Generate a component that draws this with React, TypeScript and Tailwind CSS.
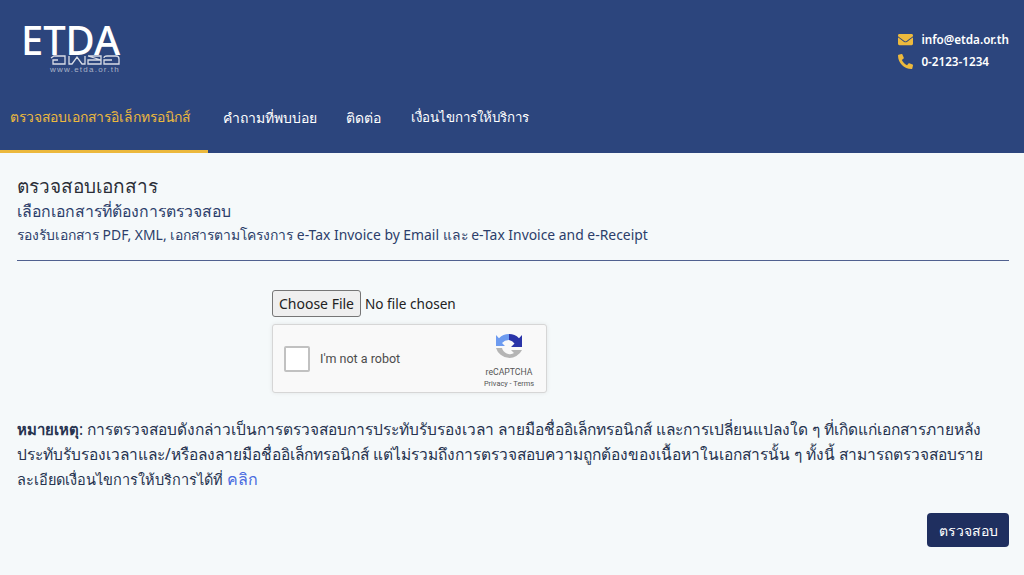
import React from "react";
import { FaEnvelope, FaPhone } from "react-icons/fa";

function Logo() {
  return (
    <div className="flex flex-col items-end w-[98px] text-white">
      <div className="font-['Noto_Sans',sans-serif] text-[40px] leading-[31px] font-medium tracking-[-0.1px] mr-[1px]">ETDA</div>
      <svg width="70" height="10" viewBox="0 0 70 10" fill="none" stroke="#d8dce6" strokeWidth="1.3" className="mr-[1px]">
        <path d="M1 3L4 1H15V9H3V5H8" />
        <path d="M19 1V9H22L27 2L32 9H35V1" />
        <path d="M38 1H51V9H38V5H51M38 1L51 5" />
        <path d="M54 3Q54 1 57 1H66Q69 1 69 4V9H54V5H62" />
      </svg>
      <div className="font-['Liberation_Sans',sans-serif] text-[8px] leading-[10px] tracking-[1.25px] text-[#a9b3c8] mr-[1px]">www.etda.or.th</div>
    </div>
  );
}

export default function App() {
  return (
    <div className="w-[1024px] h-[575px] overflow-hidden bg-[#f5f9fa] font-['Noto_Sans','Noto_Sans_CJK_SC',sans-serif] text-[#2c3e6a]">
      <header className="h-[153px] bg-[#2c457d] flex flex-col">
        <div className="h-[97px] flex justify-between pl-[23px] pr-[15px] pt-[24px]">
          <Logo />
          <div className="flex flex-col gap-[4px] pt-[6px] text-[11.7px] leading-[18px] font-semibold text-white">
            <div className="flex items-center gap-[8px]"><FaEnvelope size={15} color="#ecb93d" />info@etda.or.th</div>
            <div className="flex items-center gap-[8px]"><FaPhone size={15} color="#ecb93d" className="-scale-x-100" />0-2123-1234</div>
          </div>
        </div>
        <nav className="h-[56px] flex text-[14px] font-medium text-white">
          <a className="w-[208px] pl-[10px] pt-[10px] text-[13.9px] text-[#ecb93d] border-b-[3px] border-[#ecb93d]">ตรวจสอบเอกสารอิเล็กทรอนิกส์</a>
          <a className="pl-[15px] pr-[29px] pt-[10px]">คำถามที่พบบ่อย</a>
          <a className="pr-[30px] pt-[10px]">ติดต่อ</a>
          <a className="pt-[11px] text-[13.3px]">เงื่อนไขการให้บริการ</a>
        </nav>
      </header>
      <main className="pl-[17px] pr-[15px] pt-[20px]">
        <h1 className="text-[19px] leading-[26px] text-[#2b2f38]">ตรวจสอบเอกสาร</h1>
        <h2 className="mt-[1px] text-[15.8px] leading-[23px]">เลือกเอกสารที่ต้องการตรวจสอบ</h2>
        <p className="text-[13.9px] leading-[24px]">รองรับเอกสาร PDF, XML, เอกสารตามโครงการ e-Tax Invoice by Email และ e-Tax Invoice and e-Receipt</p>
        <hr className="mt-[13px] border-t border-[#50618f]" />
        <div className="pl-[255px] pt-[29px]">
          <div className="flex items-center h-[27px] text-[14px] text-[#222]">
            <button className="h-[27px] w-[89px] bg-[#efefef] border border-[#767676] rounded-[3px]">Choose File</button>
            <span className="ml-[4px] pt-[1px] text-[13.6px]">No file chosen</span>
          </div>
          <div className="mt-[7px] w-[275px] h-[69px] bg-[#f9f9f9] border border-[#d6d6d6] rounded-[3px] shadow-[0_0_4px_rgba(0,0,0,0.08)] flex items-center pl-[11px] pr-[11px]">
            <div className="w-[26px] h-[26px] bg-white border-2 border-[#c1c1c1] rounded-[2px]" />
            <span className="ml-[10px] pt-[1px] font-['Roboto',sans-serif] text-[12.5px] text-[#4c4c4c] flex-1">I'm not a robot</span>
            <div className="flex flex-col items-center w-[52px] pt-[6px] font-['Roboto',sans-serif] text-[#555]">
              <svg width="28" height="28" viewBox="0 0 28 28">
                <path d="M14 0a14 14 0 0 0-10 4.200L1 1v11h9L7 9a9 9 0 0 1 7-3z" fill="#6d9bf0" />
                <path d="M14 0a14 14 0 0 1 10 4.200L27 1v12H16l3.500-3.500a8 8 0 0 0-5.500-3.500z" fill="#2a34a8" />
                <path d="M1 14h6a8 8 0 0 0 12 5l-3-3h11a14 14 0 0 1-26-2z" fill="#b5b5b5" />
              </svg>
              <div className="text-[8.7px] leading-[10px] mt-[5px] whitespace-nowrap">reCAPTCHA</div>
              <div className="text-[7.4px] leading-[10px] mt-[2px] whitespace-nowrap">Privacy - Terms</div>
            </div>
          </div>
        </div>
        <p className="mt-[24px] text-[15.5px] leading-[25px] text-[#26334f] whitespace-nowrap">
          <b className="font-bold text-[14.9px]">หมายเหตุ</b>: การตรวจสอบดังกล่าวเป็นการตรวจสอบการประทับรับรองเวลา ลายมือชื่ออิเล็กทรอนิกส์ และการเปลี่ยนแปลงใด ๆ ที่เกิดแก่เอกสารภายหลัง<br />ประทับรับรองเวลาและ/หรือลงลายมือชื่ออิเล็กทรอนิกส์ แต่ไม่รวมถึงการตรวจสอบความถูกต้องของเนื้อหาในเอกสารนั้น ๆ ทั้งนี้ สามารถตรวจสอบราย<br /><span className="text-[14.5px]">ละเอียดเงื่อนไขการให้บริการได้ที่</span> <a className="text-[#4a6ce0] text-[16px]">คลิก</a>
        </p>
        <div className="flex justify-end mt-[21px]">
          <button className="w-[82px] h-[34px] bg-[#1f2f5f] rounded-[4px] text-white text-[14px] font-medium">ตรวจสอบ</button>
        </div>
      </main>
    </div>
  );
}
